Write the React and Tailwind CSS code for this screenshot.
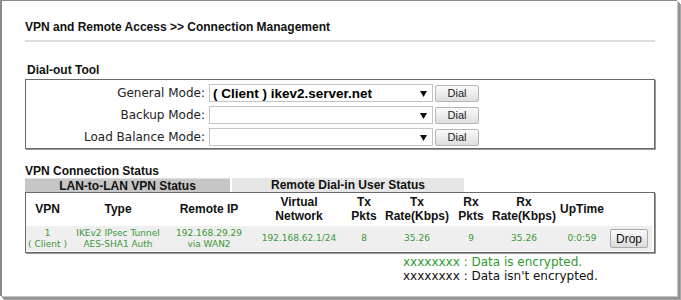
import React from "react";

const sans = { fontFamily: '"Liberation Sans", Arial, sans-serif' };
const deja = { fontFamily: '"DejaVu Sans", Verdana, sans-serif' };

const Arrow = () => (
  <svg width="7" height="6" viewBox="0 0 7 6" className="absolute right-[5px] top-[6px]">
    <path d="M0 0 H7 L3.5 6 Z" fill="#111" />
  </svg>
);

const DialRow = ({ label, value }) => (
  <div className="flex items-center h-[22px]">
    <div className="w-[179px] text-right text-[12px] text-[#222] leading-none" style={deja}>{label}</div>
    <div className="relative ml-[4px] w-[224px] h-[18px] border border-[#c4c4c4] bg-white">
      {value && (
        <span className="absolute left-[3px] top-[1px] text-[13.5px] font-bold leading-[15px] text-black" style={sans}>{value}</span>
      )}
      <Arrow />
    </div>
    <button
      className="ml-[2px] w-[44px] h-[17px] border border-[#b5b5b5] rounded-[2px] bg-gradient-to-b from-[#fbfbfb] to-[#dedede] text-[11px] leading-none text-[#222]"
      style={sans}
    >
      Dial
    </button>
  </div>
);

const cols = "grid grid-cols-[43px_98px_84px_96px_34px_72px_36px_70px_46px_1fr]";

export default function App() {
  const heads = [["VPN"], ["Type"], ["Remote IP"], ["Virtual", "Network"], ["Tx", "Pkts"], ["Tx", "Rate(Kbps)"], ["Rx", "Pkts"], ["Rx", "Rate(Kbps)"], ["UpTime"], []];
  const cells = [["1", "( Client )"], ["IKEv2 IPsec Tunnel", "AES-SHA1 Auth"], ["192.168.29.29", "via WAN2"], ["192.168.62.1/24"], ["8"], ["35.26"], ["9"], ["35.26"], ["0:0:59"]];

  return (
    <div className="w-[681px] h-[300px] bg-white overflow-hidden">
      <div className="w-[677px] h-[296px] bg-white border-l-2 border-t border-[#8a8a8a] shadow-[1px_1px_0_#c0c0c0,2px_2px_0_#9a9a9a,3px_3px_0_#8c8c8c,4px_4px_0_#a8a8a8]">
        <div className="pl-[23px] w-[653px]">
          <div className="pt-[18px] text-[12px] font-bold leading-4 text-[#111]" style={sans}>
            VPN and Remote Access &gt;&gt; Connection Management
          </div>
          <div className="mt-[5px] h-[2px] bg-[#dcdcdc]" />

          <div className="mt-[20px] pl-[2px] text-[12px] font-bold leading-4 text-[#111]" style={sans}>Dial-out Tool</div>
          <div className="mt-[1px] border border-[#6a6a6a] shadow-[1px_1px_0_#9a9a9a] pt-[2px]">
            <DialRow label="General Mode:" value="( Client ) ikev2.server.net" />
            <DialRow label="Backup Mode:" />
            <DialRow label="Load Balance Mode:" />
          </div>

          <div className="mt-[15px] text-[12px] font-bold leading-[14px] text-[#111]" style={sans}>VPN Connection Status</div>
          <div className="flex h-[14px] text-[12px] font-bold leading-[14px] text-[#111]" style={sans}>
            <div className="w-[205px] text-center bg-[#c6c6c6] border-t border-[#e0e0e0]">LAN-to-LAN VPN Status</div>
            <div className="ml-[2px] w-[232px] text-center bg-[#e6e6e6]">Remote Dial-in User Status</div>
          </div>

          <div className="border border-[#6a6a6a] shadow-[1px_1px_0_#9a9a9a] pb-[1px]">
            <div className={`${cols} h-[32px] text-[12px] font-bold leading-[14px] text-[#111]`} style={sans}>
              {heads.map((h, i) => (
                <div key={i} className="flex flex-col items-center justify-center text-center">
                  {h.map((l, j) => <span key={j}>{l}</span>)}
                </div>
              ))}
            </div>
            <div className={`${cols} mt-[1px] mr-[2px] h-[25px] bg-[#efefef] text-[9px] leading-[11px] text-[#3a973a]`} style={deja}>
              {cells.map((c, i) => (
                <div key={i} className="flex flex-col items-center justify-center text-center whitespace-nowrap">
                  {c.map((l, j) => <span key={j}>{l}</span>)}
                </div>
              ))}
              <div className="flex items-center pl-[5px]">
                <button
                  className="w-[38px] h-[19px] border border-[#aaa] rounded-[2px] bg-gradient-to-b from-[#fafafa] to-[#dcdcdc] text-[12px] leading-none text-[#111]"
                  style={sans}
                >
                  Drop
                </button>
              </div>
            </div>
          </div>

          <div className="mt-[2px] ml-[378px] text-[12px] leading-[14px] whitespace-nowrap" style={deja}>
            <div className="text-[#2f9c2f]">xxxxxxxx : Data is encrypted.</div>
            <div className="text-[#111]">xxxxxxxx : Data isn't encrypted.</div>
          </div>
        </div>
      </div>
    </div>
  );
}
